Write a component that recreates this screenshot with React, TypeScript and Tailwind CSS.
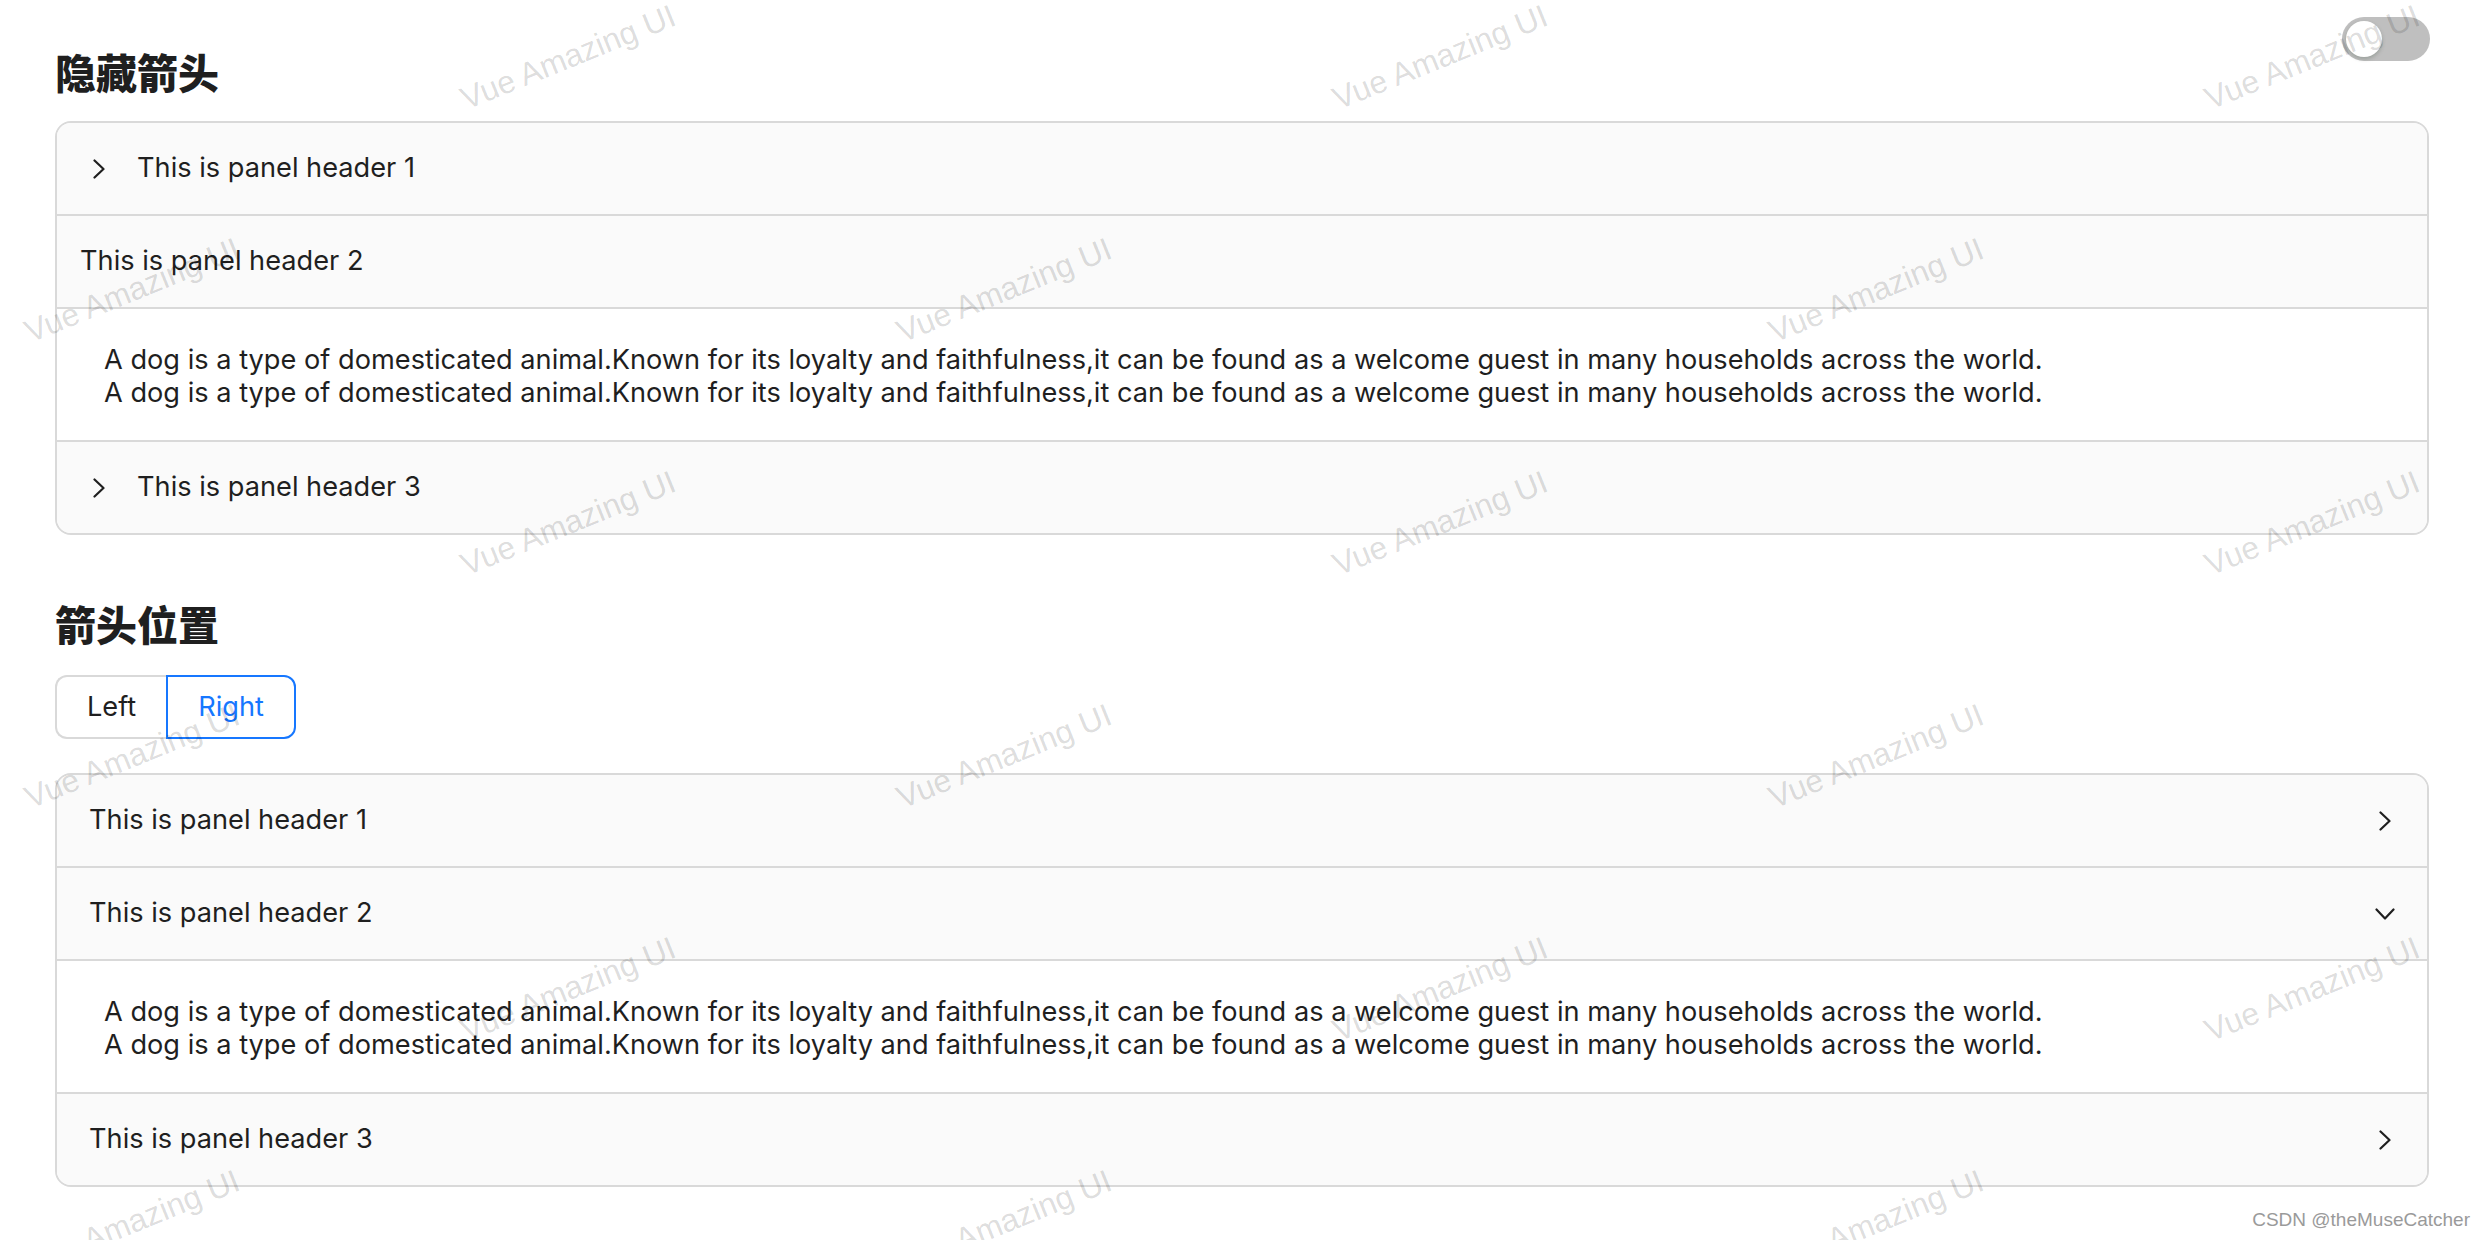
import React from "react";

const DOG =
  "A dog is a type of domesticated animal.Known for its loyalty and faithfulness,it can be found as a welcome guest in many households across the world.";

// watermark grid, measured off the reference (full-size px)
const marks: { x: number; y: number }[] = [];
for (let k = 0; k < 6; k++) {
  const y = 57 + 233 * k;
  const xs = k % 2 === 0 ? [-304, 568, 1440, 2312] : [132, 1004, 1876, 2748];
  xs.forEach((x) => marks.push({ x, y }));
}

function Chevron({ dir }: { dir: "right" | "down" }) {
  return (
    <svg
      width="14"
      height="20"
      viewBox="0 0 14 20"
      fill="none"
      className={dir === "down" ? "rotate-90" : ""}
    >
      <polyline
        points="2.5,1.5 11.5,10 2.5,18.5"
        stroke="#1f1f1f"
        strokeWidth="2.2"
        strokeLinecap="round"
        strokeLinejoin="round"
      />
    </svg>
  );
}

function Header({
  title,
  arrow,
  last,
  pad,
}: {
  title: string;
  arrow: "left" | "right-closed" | "right-open" | "none";
  last?: boolean;
  pad: string;
}) {
  return (
    <div
      className={`flex items-center bg-[#fafafa] ${pad} ${last ? "h-[91px]" : "h-[93px] border-b-2 border-[#d9d9d9]"}`}
    >
      {arrow === "left" && (
        <div className="w-[24px] flex justify-center mr-[26px]">
          <Chevron dir="right" />
        </div>
      )}
      <span className="flex-1 whitespace-nowrap">{title}</span>
      {arrow === "right-closed" && (
        <div className="w-[24px] flex justify-center mr-[30px]">
          <Chevron dir="right" />
        </div>
      )}
      {arrow === "right-open" && (
        <div className="w-[24px] flex justify-center mr-[30px]">
          <Chevron dir="down" />
        </div>
      )}
    </div>
  );
}

function Content() {
  return (
    <div className="bg-white border-b-2 border-[#d9d9d9] pl-[47px] pt-[34px] pb-[31px] leading-[33px] whitespace-nowrap">
      {DOG}
      <br />
      {DOG}
    </div>
  );
}

function Title({ children }: { children: React.ReactNode }) {
  return (
    <h2 className="text-[41px] leading-[60px] font-extrabold text-[#1f1f1f] [font-family:'Noto_Sans_CJK_SC',sans-serif]">
      {children}
    </h2>
  );
}

export default function App() {
  return (
    <div className="relative w-[2486px] h-[1240px] overflow-hidden bg-white text-[27.2px] text-[#1f1f1f] [font-family:Inter,'Noto_Sans_CJK_SC',sans-serif]">
      <div className="pl-[55px] pr-[57px] pt-[41px]">
        {/* 隐藏箭头 */}
        <Title>隐藏箭头</Title>
        <div className="mt-[20px] border-2 border-[#d9d9d9] rounded-[16px] overflow-hidden">
          <Header title="This is panel header 1" arrow="left" pad="pl-[30px]" />
          <Header title="This is panel header 2" arrow="none" pad="pl-[23px]" />
          <Content />
          <Header title="This is panel header 3" arrow="left" pad="pl-[30px]" last />
        </div>

        {/* 箭头位置 */}
        <div className="mt-[58px]">
          <Title>箭头位置</Title>
        </div>
        <div className="mt-[22px] flex h-[64px] w-fit">
          <div className="flex items-center px-[30px] border-2 border-r-0 border-[#d9d9d9] rounded-l-[12px] bg-white">
            Left
          </div>
          <div className="flex items-center px-[30px] border-2 border-[#1677ff] rounded-r-[12px] text-[#1677ff] bg-white">
            Right
          </div>
        </div>
        <div className="mt-[34px] border-2 border-[#d9d9d9] rounded-[16px] overflow-hidden">
          <Header title="This is panel header 1" arrow="right-closed" pad="pl-[32px]" />
          <Header title="This is panel header 2" arrow="right-open" pad="pl-[32px]" />
          <Content />
          <Header title="This is panel header 3" arrow="right-closed" pad="pl-[32px]" last />
        </div>
      </div>

      {/* switch, top right */}
      <div className="absolute top-[17px] right-[56px] w-[88px] h-[44px] rounded-full bg-[#bfbfbf]">
        <div className="absolute top-[4px] left-[4px] w-[36px] h-[36px] rounded-full bg-white shadow-[0_2px_4px_rgba(0,35,11,0.2)]" />
      </div>

      {/* watermark overlay */}
      <div className="absolute inset-0 pointer-events-none">
        {marks.map((m, i) => (
          <span
            key={i}
            className="absolute -translate-x-1/2 -translate-y-1/2 rotate-[-22deg] whitespace-nowrap text-[32px] text-[rgba(0,0,0,0.15)] [font-family:'Liberation_Sans',Arial,sans-serif]"
            style={{ left: m.x, top: m.y }}
          >
            Vue Amazing UI
          </span>
        ))}
      </div>

      <div className="absolute right-[16px] bottom-[6px] text-[19px] text-[#9a9a9a] [font-family:'Liberation_Sans',Arial,sans-serif]">
        CSDN @theMuseCatcher
      </div>
    </div>
  );
}
